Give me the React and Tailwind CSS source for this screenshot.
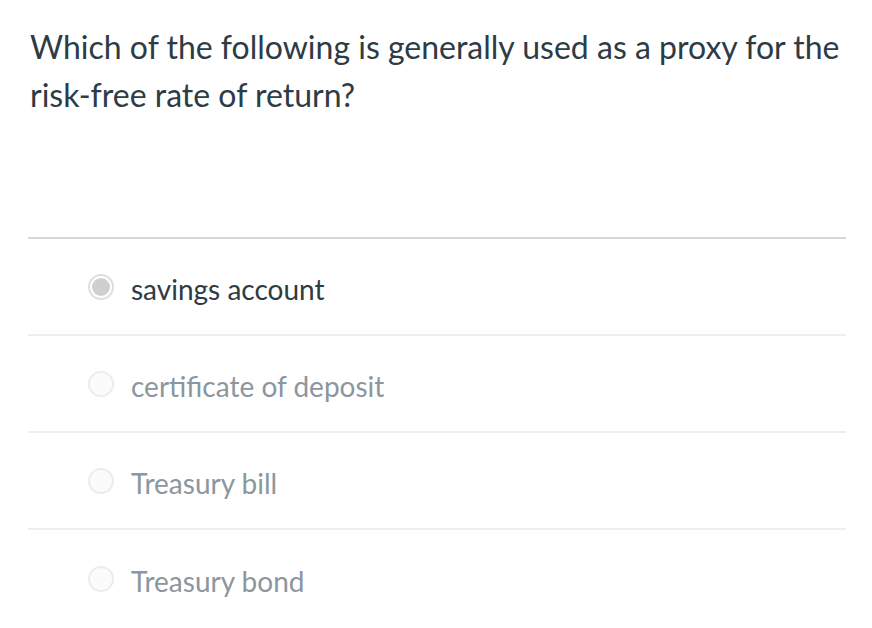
export default function App() {
  const options = [
    { label: "savings account", selected: true },
    { label: "certificate of deposit", selected: false },
    { label: "Treasury bill", selected: false },
    { label: "Treasury bond", selected: false },
  ];
  return (
    <div className="w-[872px] h-[628px] bg-white overflow-hidden" style={{ fontFamily: "Lato, 'Noto Sans', sans-serif" }}>
      <div className="ml-[28px] w-[818px]">
        <div className="pt-[23px] pl-[2px] text-[32px] leading-[48px] text-[#2d3b45] h-[237px]">
          Which of the following is generally used as a proxy for the risk-free rate of return?
        </div>
        <div className="border-t-2 border-[#d7d7d7]">
          {options.map((o, i) => (
            <div
              key={i}
              className={`flex items-center h-[97px] pl-[60px] ${i < options.length - 1 ? "border-b-2 border-[#eeeeee]" : ""}`}
            >
              {o.selected ? (
                <div className="w-[26px] h-[26px] rounded-full border-2 border-[#dedede] bg-white flex items-center justify-center shrink-0">
                  <div className="w-[18px] h-[18px] rounded-full bg-[#cfcfcf]" />
                </div>
              ) : (
                <div className="w-[26px] h-[26px] rounded-full border-2 border-[#ececec] bg-[#fbfbfb] shrink-0" />
              )}
              <span
                className={`ml-[17px] text-[28px] leading-[40px] mt-[4px] ${o.selected ? "text-[#2d3b45]" : "text-[#8b969e]"}`}
              >
                {o.label}
              </span>
            </div>
          ))}
        </div>
      </div>
    </div>
  );
}
